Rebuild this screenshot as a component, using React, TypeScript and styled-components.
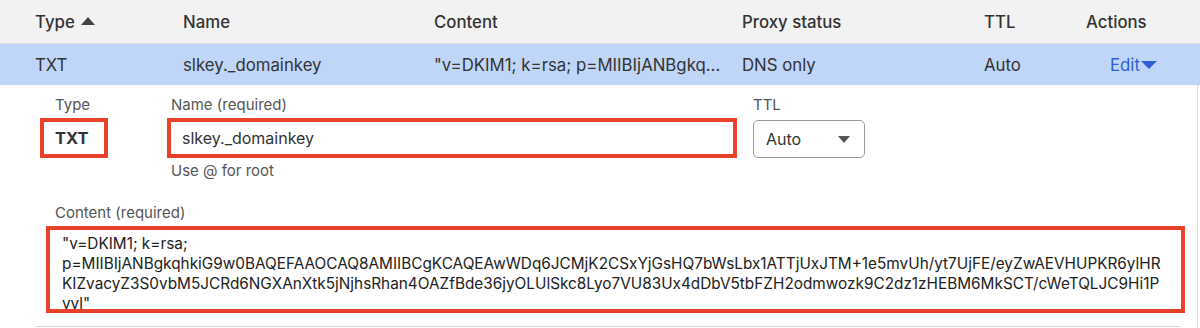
import styled, { createGlobalStyle } from 'styled-components';

const GlobalStyle = createGlobalStyle`
  body {
    margin: 0;
    background: #fff;
    font-family: 'Inter', 'Liberation Sans', sans-serif;
    color: #333;
  }
`;

const highlight = '#e8432a';

const Page = styled.div`
  width: 1200px;
  height: 328px;
  overflow: hidden;
`;

const Row = styled.div<{ $header?: boolean }>`
  display: grid;
  grid-template-columns: 148px 251px 308px 242px 102px 1fr;
  align-items: center;
  padding-left: 35px;
  height: ${(p) => (p.$header ? '43px' : '41px')};
  background: ${(p) => (p.$header ? '#f2f2f2' : '#bfd6f8')};
  border-bottom: ${(p) => (p.$header ? '1px solid #dcdcdc' : 'none')};
  font-size: 16.8px;
  font-weight: ${(p) => (p.$header ? 500 : 400)};
  color: #333;
  white-space: nowrap;
`;

const Cell = styled.div`
  overflow: hidden;
`;

const SortArrow = styled.span`
  display: inline-block;
  margin-left: 6px;
  border-left: 7px solid transparent;
  border-right: 7px solid transparent;
  border-bottom: 8px solid #444;
  vertical-align: 3px;
`;

const EditLink = styled.span`
  color: #2e5fd3;
  padding-left: 24px;
`;

const DropArrow = styled.span`
  display: inline-block;
  margin-left: 1px;
  border-left: 8px solid transparent;
  border-right: 8px solid transparent;
  border-top: 8px solid #2e5fd3;
  vertical-align: 2px;
`;

const Panel = styled.div`
  width: 1198px;
  height: 243px;
  border-right: 1px solid #ddd;
  padding-top: 11px;
  box-sizing: border-box;
`;

const FieldRow = styled.div`
  display: flex;
  align-items: flex-start;
  padding-left: 40px;
`;

const Field = styled.div<{ $gap: number }>`
  display: flex;
  flex-direction: column;
  margin-right: ${(p) => p.$gap}px;
`;

const Label = styled.div<{ $indent?: number }>`
  font-size: 15px;
  line-height: 18px;
  color: #555;
  padding-left: ${(p) => p.$indent ?? 0}px;
  margin-bottom: 4px;
`;

const TypeValue = styled.div`
  width: 68px;
  height: 40px;
  box-sizing: border-box;
  border: 4px solid ${highlight};
  padding-left: 11px;
  display: flex;
  align-items: center;
  font-size: 16.5px;
  font-weight: 700;
  color: #333;
`;

const NameInput = styled.div`
  width: 570px;
  height: 40px;
  box-sizing: border-box;
  border: 4px solid ${highlight};
  padding-left: 11px;
  display: flex;
  align-items: center;
  font-size: 16px;
  color: #333;
`;

const Hint = styled.div`
  font-size: 15px;
  line-height: 18px;
  color: #555;
  padding-left: 4px;
  margin-top: 4px;
`;

const Select = styled.div`
  width: 112px;
  height: 38px;
  margin-top: 2px;
  box-sizing: border-box;
  border: 1px solid #9a9a9a;
  border-radius: 5px;
  display: flex;
  align-items: center;
  justify-content: space-between;
  padding: 0 14px 0 12px;
  font-size: 16px;
  color: #333;
`;

const SelectArrow = styled.span`
  border-left: 6px solid transparent;
  border-right: 6px solid transparent;
  border-top: 7px solid #555;
`;

const ContentBlock = styled.div`
  margin-top: 24px;
  padding-left: 46px;
`;

const ContentArea = styled.div`
  width: 1139px;
  height: 87px;
  box-sizing: border-box;
  border: 4px solid ${highlight};
  padding: 4px 12px 0;
  overflow: hidden;
  font-size: 15.35px;
  line-height: 20px;
  color: #222;
`;

const Line = styled.div`
  white-space: nowrap;
`;

const Divider = styled.div`
  margin: 13px 0 0 36px;
  width: 1144px;
  border-top: 1px solid #d6d6d6;
`;

const contentLines = [
  '"v=DKIM1; k=rsa;',
  'p=MIIBIjANBgkqhkiG9w0BAQEFAAOCAQ8AMIIBCgKCAQEAwWDq6JCMjK2CSxYjGsHQ7bWsLbx1ATTjUxJTM+1e5mvUh/yt7UjFE/eyZwAEVHUPKR6ylHR',
  'KIZvacyZ3S0vbM5JCRd6NGXAnXtk5jNjhsRhan4OAZfBde36jyOLUlSkc8Lyo7VU83Ux4dDbV5tbFZH2odmwozk9C2dz1zHEBM6MkSCT/cWeTQLJC9Hi1P',
  'vyl"',
];

const App = () => (
  <Page>
    <GlobalStyle />
    <Row $header>
      <Cell>
        Type
        <SortArrow />
      </Cell>
      <Cell>Name</Cell>
      <Cell>Content</Cell>
      <Cell>Proxy status</Cell>
      <Cell>TTL</Cell>
      <Cell>Actions</Cell>
    </Row>
    <Row>
      <Cell>TXT</Cell>
      <Cell>slkey._domainkey</Cell>
      <Cell>"v=DKIM1; k=rsa; p=MIIBIjANBgkq...</Cell>
      <Cell>DNS only</Cell>
      <Cell>Auto</Cell>
      <Cell>
        <EditLink>
          Edit
          <DropArrow />
        </EditLink>
      </Cell>
    </Row>
    <Panel>
      <FieldRow>
        <Field $gap={59}>
          <Label $indent={15}>Type</Label>
          <TypeValue>TXT</TypeValue>
        </Field>
        <Field $gap={16}>
          <Label $indent={4}>Name (required)</Label>
          <NameInput>slkey._domainkey</NameInput>
          <Hint>Use @ for root</Hint>
        </Field>
        <Field $gap={0}>
          <Label>TTL</Label>
          <Select>
            Auto
            <SelectArrow />
          </Select>
        </Field>
      </FieldRow>
      <ContentBlock>
        <Label $indent={9}>Content (required)</Label>
        <ContentArea>
          {contentLines.map((l) => (
            <Line key={l}>{l}</Line>
          ))}
        </ContentArea>
      </ContentBlock>
      <Divider />
    </Panel>
  </Page>
);

export default App;
